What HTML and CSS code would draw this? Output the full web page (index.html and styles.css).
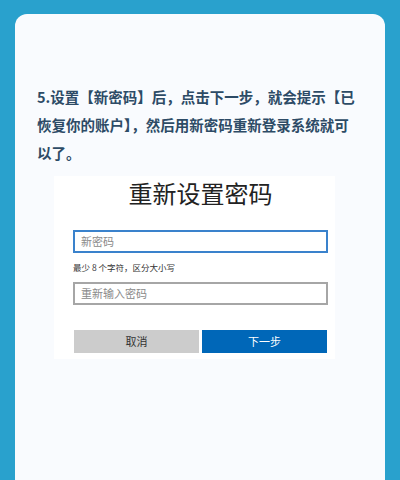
FILE: index.html
```html
<!DOCTYPE html>
<html lang="zh">
<head>
<meta charset="utf-8">
<link rel="stylesheet" href="styles.css">
</head>
<body>
<div class="card">
  <p class="step">5.设置【新密码】后，点击下一步，就会提示【已恢复你的账户】，然后用新密码重新登录系统就可以了。</p>
  <div class="shot">
    <div class="title">重新设置密码</div>
    <div class="input focus">新密码</div>
    <div class="hint">最少 8 个字符，区分大小写</div>
    <div class="input">重新输入密码</div>
    <div class="buttons">
      <div class="btn cancel">取消</div>
      <div class="btn next">下一步</div>
    </div>
  </div>
</div>
</body>
</html>
```
FILE: styles.css
```css
html, body {
  margin: 0;
  padding: 0;
  overflow: hidden;
}
body {
  background: #29a1cd;
  font-family: "Noto Sans CJK SC", "Noto Sans", sans-serif;
  padding: 14px 15px 0;
}
.card {
  background: #f9fbfe;
  border-radius: 12px 12px 0 0;
  height: 466px;
  padding: 69px 26px 0 22px;
  box-sizing: border-box;
}
.step {
  margin: 0;
  font-size: 14.5px;
  line-height: 28px;
  font-weight: 700;
  color: #2d4b66;
}
.shot {
  margin: 9px 0 0 17px;
  width: 281px;
  background: #ffffff;
  padding: 0 7px 6px 19px;
  box-sizing: border-box;
  display: flex;
  flex-direction: column;
}
.title {
  text-align: center;
  font-size: 24px;
  line-height: 34px;
  color: #222;
  margin-bottom: 20px;
}
.input {
  height: 23px;
  box-sizing: border-box;
  border: 2px solid #a6a6a6;
  padding-left: 6px;
  font-size: 11px;
  line-height: 19px;
  color: #8a8a8a;
}
.input.focus {
  border-color: #3a82cc;
}
.hint {
  margin: 9px 0 10px;
  font-size: 8.5px;
  line-height: 10px;
  color: #333;
}
.buttons {
  margin: 25px 1px 0;
  display: flex;
  gap: 3px;
}
.btn {
  flex: 1;
  height: 23px;
  font-size: 11px;
  line-height: 23px;
  text-align: center;
}
.cancel {
  background: #cccccc;
  color: #333;
}
.next {
  background: #0067b8;
  color: #fff;
}
```
